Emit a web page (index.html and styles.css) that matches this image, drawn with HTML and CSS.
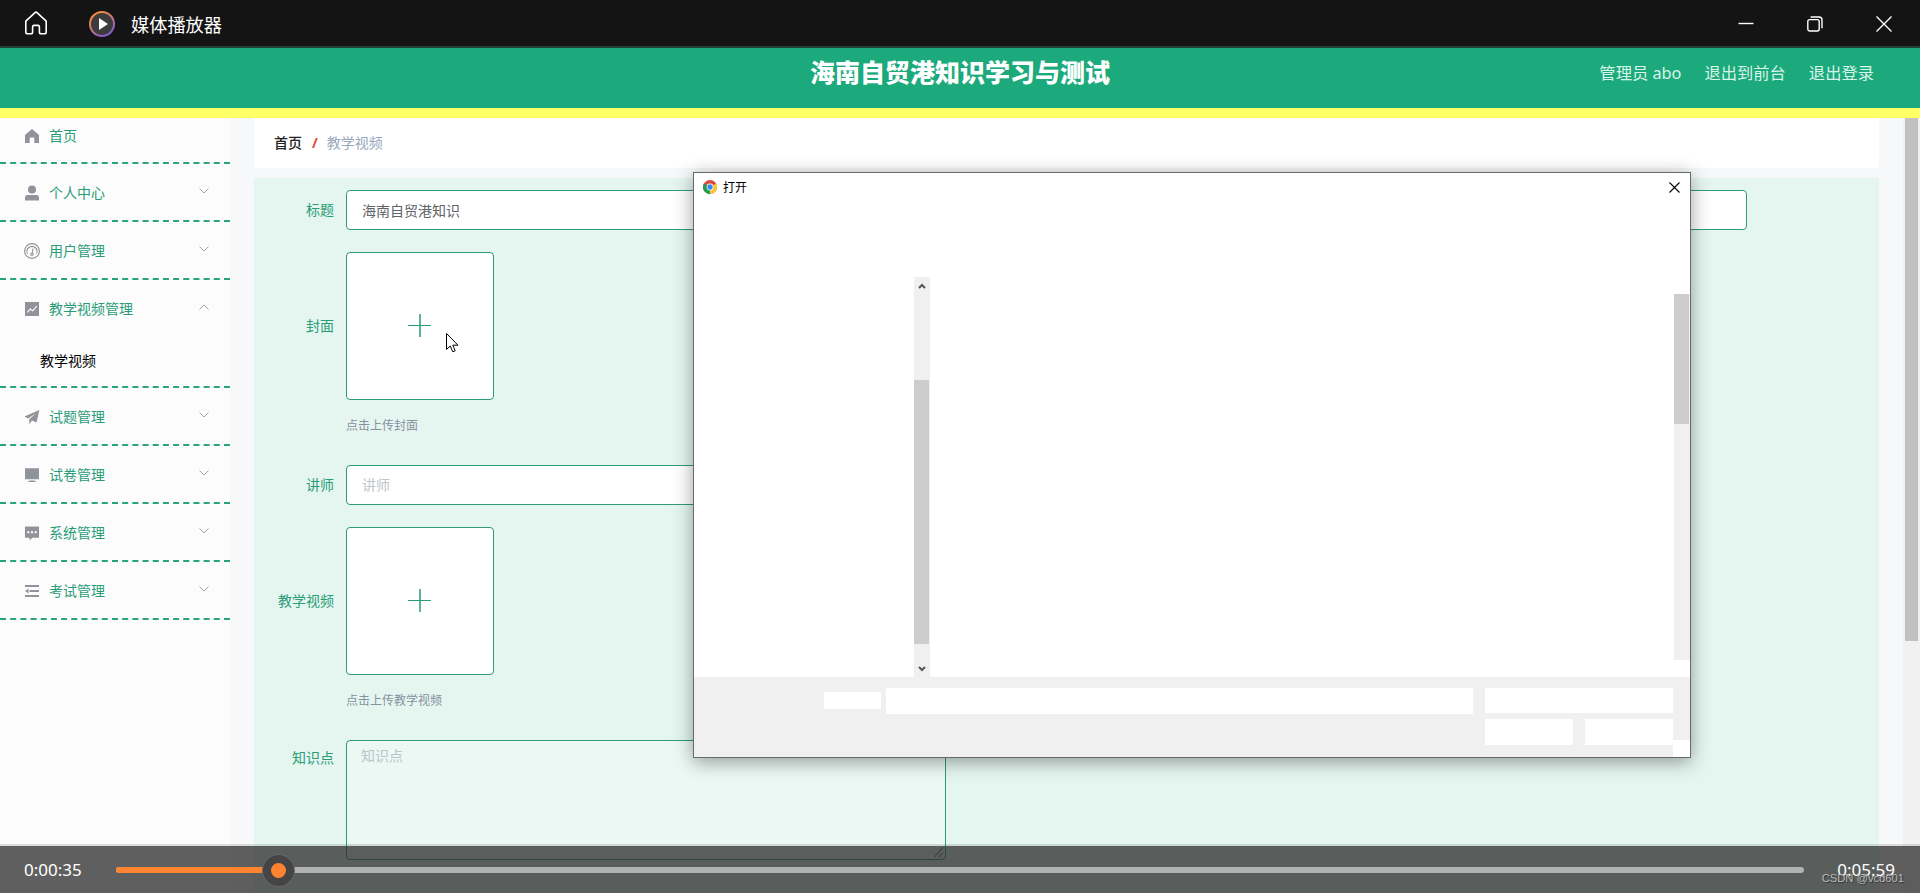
FILE: index.html
```html
<!DOCTYPE html>
<html lang="zh-CN">
<head>
    <meta charset="UTF-8">
    <title>海南自贸港知识学习与测试</title>
    <meta name="viewport" content="width=device-width, initial-scale=1.0">
    <link rel="stylesheet" href="styles.css">
</head>
<body>

    <!-- Player title bar -->
    <div class="player-title">
        <svg class="home-icon" width="24" height="26" viewBox="0 0 24 26" fill="none" stroke="#fff" stroke-width="1.6" stroke-linejoin="round"><path d="M1.8 11.2 L11 2.6 Q12 1.7 13 2.6 L22.2 11.2 V22 Q22.2 23.8 20.4 23.8 H17 Q15.4 23.8 15.4 22 V17 Q15.4 15.4 14 15.4 H10 Q8.6 15.4 8.6 17 V22 Q8.6 23.8 7 23.8 H3.6 Q1.8 23.8 1.8 22 Z"/></svg>
        <svg class="play-icon" width="26" height="26" viewBox="0 0 26 26">
            <defs>
                <linearGradient id="ring" x1="0" y1="0" x2=".6" y2="1"><stop offset="0.2" stop-color="#f58b3c"/><stop offset="1" stop-color="#8a5bd0"/></linearGradient>
            </defs>
            <circle cx="13" cy="13" r="12" fill="#3c3c3c" stroke="url(#ring)" stroke-width="2"/>
            <path d="M10 7 L19 13 L10 19 Z" fill="#fff"/>
        </svg>
        <span class="player-name">媒体播放器</span>
        <div class="window-buttons">
            <svg width="16" height="16" viewBox="0 0 16 16" stroke="#fff" stroke-width="1.4"><path d="M0.5 7.5 H15.5"/></svg>
            <svg width="16" height="16" viewBox="0 0 16 16" fill="none" stroke="#fff" stroke-width="1.4"><rect x="0.8" y="3.6" width="11.4" height="11.4" rx="2"/><path d="M3.6 1 H12 Q15 1 15 4 V12.2"/></svg>
            <svg width="16" height="16" viewBox="0 0 16 16" stroke="#fff" stroke-width="1.4"><path d="M0.5 0.5 L15.5 15.5 M15.5 0.5 L0.5 15.5"/></svg>
        </div>
    </div>

    <!-- Header -->
    <div class="header">
        <h1>海南自贸港知识学习与测试</h1>
        <div class="header-links">
            <a>管理员 abo</a>
            <a>退出到前台</a>
            <a>退出登录</a>
        </div>
    </div>

    <div class="main">
        <!-- Side menu -->
        <ul class="menu">
            <li class="first">
                <div class="menu-item">
                    <svg class="icon" viewBox="0 0 16 16"><path d="M8 1 L15 7 V15 H10.3 V10.5 Q10.3 9.5 9.3 9.5 H6.7 Q5.7 9.5 5.7 10.5 V15 H1 V7 Z"/></svg>
                    <span>首页</span>
                </div>
            </li>
            <li>
                <div class="menu-item">
                    <svg class="icon" viewBox="0 0 16 16"><circle cx="8" cy="4.4" r="4"/><path d="M1 15.5 V13 Q1 10 4 10 H12 Q15 10 15 13 V15.5 Z"/></svg>
                    <span>个人中心</span>
                    <svg class="arrow" viewBox="0 0 10 6"><path d="M0.5 0.5 L5 5 L9.5 0.5"/></svg>
                </div>
            </li>
            <li>
                <div class="menu-item">
                    <svg class="icon line" viewBox="0 0 16 16"><circle cx="8" cy="8" r="7.4"/><path d="M3.4 11 A5.2 5.2 0 1 1 12.6 11 M9 5.5 L8.3 10"/><circle cx="8" cy="11.2" r="1.2"/></svg>
                    <span>用户管理</span>
                    <svg class="arrow" viewBox="0 0 10 6"><path d="M0.5 0.5 L5 5 L9.5 0.5"/></svg>
                </div>
            </li>
            <li>
                <div class="menu-item">
                    <svg class="icon" viewBox="0 0 16 16"><rect x="1" y="1" width="14" height="14"/><path d="M3.2 11.3 L6.3 8 L8.8 9.8 L12.7 5.2" fill="none" stroke="#fff" stroke-width="1.1"/></svg>
                    <span>教学视频管理</span>
                    <svg class="arrow up" viewBox="0 0 10 6"><path d="M0.5 0.5 L5 5 L9.5 0.5"/></svg>
                </div>
                <div class="sub-item">教学视频</div>
            </li>
            <li>
                <div class="menu-item">
                    <svg class="icon" viewBox="0 0 16 16"><path d="M0.5 7.6 L15.3 1 L12.6 13.6 L8 11.4 L5.4 15.3 L5.2 10.3 L12.2 4.3 L4 9.6 Z"/></svg>
                    <span>试题管理</span>
                    <svg class="arrow" viewBox="0 0 10 6"><path d="M0.5 0.5 L5 5 L9.5 0.5"/></svg>
                </div>
            </li>
            <li>
                <div class="menu-item">
                    <svg class="icon" viewBox="0 0 16 16"><path d="M1 1.3 H15 V12.3 H1 Z M6 13.4 H10 L12.5 15 H3.5 Z"/></svg>
                    <span>试卷管理</span>
                    <svg class="arrow" viewBox="0 0 10 6"><path d="M0.5 0.5 L5 5 L9.5 0.5"/></svg>
                </div>
            </li>
            <li>
                <div class="menu-item">
                    <svg class="icon" viewBox="0 0 16 16"><path d="M1 1.5 H15 V12.8 H8.5 L5.5 15.2 V12.8 H1 Z"/><path d="M3.3 6.3 H5.3 V8.3 H3.3 Z M7 6.3 H9 V8.3 H7 Z M10.7 6.3 H12.7 V8.3 H10.7 Z" fill="#fff"/></svg>
                    <span>系统管理</span>
                    <svg class="arrow" viewBox="0 0 10 6"><path d="M0.5 0.5 L5 5 L9.5 0.5"/></svg>
                </div>
            </li>
            <li>
                <div class="menu-item">
                    <svg class="icon" viewBox="0 0 16 16"><path d="M1 2 H15 V4 H1 Z M5.5 7 H15 V9 H5.5 Z M1 12 H15 V14 H1 Z M1 8 L4.5 5.5 V10.5 Z"/></svg>
                    <span>考试管理</span>
                    <svg class="arrow" viewBox="0 0 10 6"><path d="M0.5 0.5 L5 5 L9.5 0.5"/></svg>
                </div>
            </li>
        </ul>

        <!-- Page content -->
        <div class="content">
            <div class="breadcrumb">
                <span class="home">首页</span><span class="sep">/</span><span class="current">教学视频</span>
            </div>
            <form class="form">
                <div class="row">
                    <label>标题</label>
                    <div class="input title-input">海南自贸港知识</div>
                </div>
                <div class="row upload-row">
                    <label>封面</label>
                    <div>
                        <div class="upload"></div>
                        <div class="tip">点击上传封面</div>
                    </div>
                </div>
                <div class="row">
                    <label>讲师</label>
                    <div class="input placeholder">讲师</div>
                </div>
                <div class="row upload-row">
                    <label>教学视频</label>
                    <div>
                        <div class="upload"></div>
                        <div class="tip">点击上传教学视频</div>
                    </div>
                </div>
                <div class="row">
                    <label>知识点</label>
                    <div class="textarea">知识点
                        <svg class="resizer" width="10" height="12" viewBox="0 0 10 12" stroke="#555"><path d="M0.5 11 L9 1 M5 11 L9 6.5"/></svg>
                    </div>
                </div>
            </form>
        </div>

        <div class="scrollbar"><div class="thumb"></div></div>
    </div>

    <!-- Open file dialog -->
    <div class="dialog">
        <div class="dialog-title">
            <svg width="14" height="14" viewBox="0 0 14 14">
                <circle cx="7" cy="7" r="7" fill="#dc4a3d"/>
                <path d="M7 7 L13.1 3.5 A7 7 0 0 1 7 14 Z" fill="#fbc934"/>
                <path d="M7 7 L7 14 A7 7 0 0 1 0.9 3.5 Z" fill="#1f9d58"/>
                <circle cx="7" cy="7" r="3.4" fill="#fff"/>
                <circle cx="7" cy="7" r="2.7" fill="#4286f5"/>
            </svg>
            <span>打开</span>
            <svg class="dialog-close" width="11" height="11" viewBox="0 0 11 11" stroke="#000" stroke-width="1.1"><path d="M0.5 0.5 L10.5 10.5 M10.5 0.5 L0.5 10.5"/></svg>
        </div>
        <div class="dialog-body">
            <div class="tree-scroll">
                <svg width="8" height="6" viewBox="0 0 8 6"><path d="M1 5 L4 2 L7 5"/></svg>
                <div class="tree-thumb"></div>
                <svg width="8" height="6" viewBox="0 0 8 6"><path d="M1 1 L4 4 L7 1"/></svg>
            </div>
            <div class="list-scroll"><div class="list-thumb"></div></div>
        </div>
        <div class="dialog-footer">
            <div class="name-label"></div>
            <div class="name-input"></div>
            <div class="dialog-actions">
                <div class="type-select"></div>
                <div class="btn"></div>
                <div class="btn"></div>
            </div>
            <div class="corner"></div>
        </div>
    </div>

    <svg class="cursor" width="13" height="20" viewBox="0 0 13 20"><path d="M0.5 0.5 V16.5 L4.2 13 L6.8 18.8 L9.2 17.8 L6.8 12.2 H12 Z" fill="#fff" stroke="#000"/></svg>

    <!-- Player controls -->
    <div class="controls">
        <span class="time">0:00:35</span>
        <div class="track">
            <div class="played"></div>
            <div class="knob"></div>
        </div>
        <span class="time">0:05:59</span>
        <span class="watermark">CSDN @vcd601</span>
    </div>

</body>
</html>
```
FILE: styles.css
```css
/* General Styles */
* {
    box-sizing: border-box;
}

body {
    font-family: "Noto Sans", "Noto Sans CJK SC", sans-serif;
    font-size: 14px;
    margin: 0;
    height: 893px;
    overflow: hidden;
    display: flex;
    flex-direction: column;
    position: relative;
    background-color: #f7f8fa;
}

svg {
    display: block;
    flex: none;
}

/* Player title bar */
.player-title {
    height: 48px;
    flex: none;
    display: flex;
    align-items: center;
    padding: 0 28px 0 24px;
    background-color: #141414;
    border-bottom: 2px solid #20423a;
    color: #fff;
}

.play-icon {
    margin-left: 41px;
    margin-top: 2px;
}

.player-name {
    margin-left: 16px;
    margin-top: 1px;
    font-size: 18.2px;
}

.window-buttons {
    display: flex;
    gap: 53px;
    margin-left: auto;
    margin-top: 1px;
}

/* Header */
.header {
    height: 70px;
    flex: none;
    display: grid;
    grid-template-columns: 1fr auto 1fr;
    align-items: center;
    padding-bottom: 12px;
    padding-right: 46px;
    padding-left: 46px;
    background-color: #1ca97b;
    border-bottom: 10px solid #ffff66;
    color: #fff;
}

.header h1 {
    grid-column: 2;
    margin: 0;
    font-size: 25px;
    font-weight: 900;
    line-height: 48px;
}

.header-links {
    display: flex;
    justify-content: flex-end;
    gap: 23px;
    font-size: 16.3px;
    color: #d9f3ea;
}

.main {
    flex: 1;
    min-height: 0;
    display: flex;
    overflow: hidden;
}

/* Side menu */
.menu {
    width: 230px;
    flex: none;
    margin: 0;
    padding: 0;
    list-style: none;
    background-color: #fcfcfc;
    color: #2a9d78;
}

.menu li {
    border-bottom: 2px dashed #28a57b;
}

.menu li.first {
    margin-top: -12px;
}

.menu-item {
    height: 56px;
    display: flex;
    align-items: center;
    padding: 2px 21px 0 24px;
}

.menu-item span {
    margin-bottom: 2px;
}

.first .menu-item {
    padding-top: 4px;
}

.icon {
    width: 16px;
    height: 16px;
    margin-right: 9px;
    fill: #909399;
}

.icon.line {
    fill: none;
    stroke: #909399;
    stroke-width: 1.1;
}

.arrow {
    width: 10px;
    height: 6px;
    margin-left: auto;
    margin-bottom: 4px;
    fill: none;
    stroke: #a3a6ab;
}

.arrow.up {
    transform: rotate(180deg);
}

.sub-item {
    height: 50px;
    line-height: 49px;
    padding-left: 40px;
    color: #000;
}

/* Page content */
.content {
    flex: 1;
    margin: 0 24px;
    display: flex;
    flex-direction: column;
}

.breadcrumb {
    height: 50px;
    flex: none;
    line-height: 49px;
    padding-left: 20px;
    margin-bottom: 10px;
    background-color: #fff;
    border-radius: 0 0 4px 4px;
}

.breadcrumb .home {
    color: #222;
    font-weight: 500;
}

.breadcrumb .sep {
    margin: 0 9px 0 10px;
    color: #e8452c;
    font-weight: 700;
}

.breadcrumb .current {
    color: #97a8be;
}

.form {
    flex: 1;
    padding-top: 12px;
    background-color: #e5f6f0;
}

.row {
    display: flex;
    margin-bottom: 22px;
}

label {
    width: 80px;
    flex: none;
    line-height: 39px;
    margin-right: 12px;
    text-align: right;
    color: #2a9d78;
}

.input {
    width: 600px;
    height: 40px;
    line-height: 39px;
    padding-left: 15px;
    background-color: #fff;
    border: 1px solid #2f9c78;
    border-radius: 4px;
    color: #606266;
}

.title-input {
    width: 1401px;
}

.input.placeholder {
    line-height: 37px;
    color: #c0c4cc;
}

.upload-row {
    height: 191px;
}

.upload-row label {
    line-height: 147px;
}

.upload {
    width: 148px;
    height: 148px;
    border: 1px solid #2f9c78;
    border-radius: 4px;
    background:
        linear-gradient(#2a9d78, #2a9d78) 61px 72px / 23px 1px no-repeat,
        linear-gradient(#5db496, #5db496) 72px 61px / 2px 23px no-repeat,
        #fff;
}

.tip {
    margin-top: 8px;
    font-size: 12px;
    line-height: 36px;
    color: #85919f;
}

.textarea {
    position: relative;
    width: 600px;
    height: 120px;
    padding: 5px 14px;
    line-height: 20px;
    background-color: #ebf8f4;
    border: 1px solid #2f9c78;
    border-radius: 4px;
    color: #b9c5c9;
}

.row:last-child label {
    line-height: 36px;
}

.resizer {
    position: absolute;
    right: 1px;
    bottom: 1px;
}

.scrollbar {
    width: 17px;
    flex: none;
    padding: 0 2px;
    background-color: #f1f1f1;
}

.scrollbar .thumb {
    height: 523px;
    background-color: #c1c1c1;
}

/* Open file dialog */
.dialog {
    position: absolute;
    left: 693px;
    top: 172px;
    width: 998px;
    height: 586px;
    display: flex;
    flex-direction: column;
    background-color: #fff;
    border: 1px solid #666b69;
    box-shadow: 0 4px 18px rgba(0, 0, 0, 0.38);
}

.dialog-title {
    height: 28px;
    display: flex;
    align-items: center;
    padding: 0 10px 0 9px;
    font-size: 12px;
    color: #000;
}

.dialog-title span {
    margin-left: 6px;
}

.dialog-close {
    margin-left: auto;
}

.dialog-body {
    flex: 1;
    display: flex;
    justify-content: space-between;
    padding: 76px 0 0 220px;
}

.tree-scroll {
    width: 16px;
    display: flex;
    flex-direction: column;
    align-items: flex-start;
    padding-top: 6px;
    background-color: #f0f0f0;
}

.tree-scroll svg {
    margin-left: 4px;
}

.tree-scroll path {
    fill: none;
    stroke: #555;
    stroke-width: 2;
}

.tree-thumb {
    width: 15px;
    height: 264px;
    margin: 91px 0 22px;
    background-color: #cdcdcd;
}

.list-scroll {
    width: 16px;
    margin-top: 17px;
    margin-bottom: 17px;
    background-color: #f0f0f0;
}

.list-thumb {
    width: 15px;
    height: 130px;
    background-color: #cdcdcd;
}

.dialog-footer {
    height: 80px;
    flex: none;
    display: flex;
    align-items: flex-start;
    padding: 11px 0 0 130px;
    background-color: #f0f0f0;
}

.name-label,
.name-input,
.type-select,
.btn,
.corner {
    background-color: #fff;
}

.name-label {
    width: 57px;
    height: 17px;
    margin: 4px 5px 0 0;
}

.name-input {
    width: 587px;
    height: 26px;
    margin-right: 12px;
}

.dialog-actions {
    width: 188px;
    display: flex;
    flex-wrap: wrap;
    justify-content: space-between;
    row-gap: 6px;
}

.type-select {
    width: 188px;
    height: 25px;
}

.btn {
    width: 88px;
    height: 26px;
}

.corner {
    flex: 1;
    height: 17px;
    align-self: flex-end;
}

.cursor {
    position: absolute;
    left: 446px;
    top: 333px;
}

/* Player controls */
.controls {
    position: absolute;
    left: 0;
    right: 0;
    bottom: 0;
    height: 49px;
    display: flex;
    align-items: center;
    justify-content: space-between;
    padding: 0 25px 0 24px;
    background-color: rgba(40, 40, 40, 0.74);
    background-clip: padding-box;
    border-top: 2px solid rgba(0, 0, 0, 0.12);
    color: #fff;
}

.time {
    font-size: 17px;
    line-height: 47px;
}

.track {
    position: relative;
    width: 1688px;
    height: 6px;
    border-radius: 3px;
    background-color: #b1b4b2;
}

.played {
    width: 162px;
    height: 6px;
    border-radius: 3px;
    background-color: #ff8432;
}

.knob {
    position: absolute;
    left: 147px;
    top: -12px;
    width: 31px;
    height: 31px;
    border: 8px solid #454545;
    border-radius: 50%;
    background-color: #ff8432;
    box-shadow: 0 0 0 1px #666;
}

.watermark {
    position: absolute;
    right: 16px;
    bottom: 7px;
    font-family: "Liberation Sans", sans-serif;
    font-size: 11.2px;
    line-height: 16px;
    color: #b9bbba;
    text-shadow: 1px 1px 1px #333;
}
```
